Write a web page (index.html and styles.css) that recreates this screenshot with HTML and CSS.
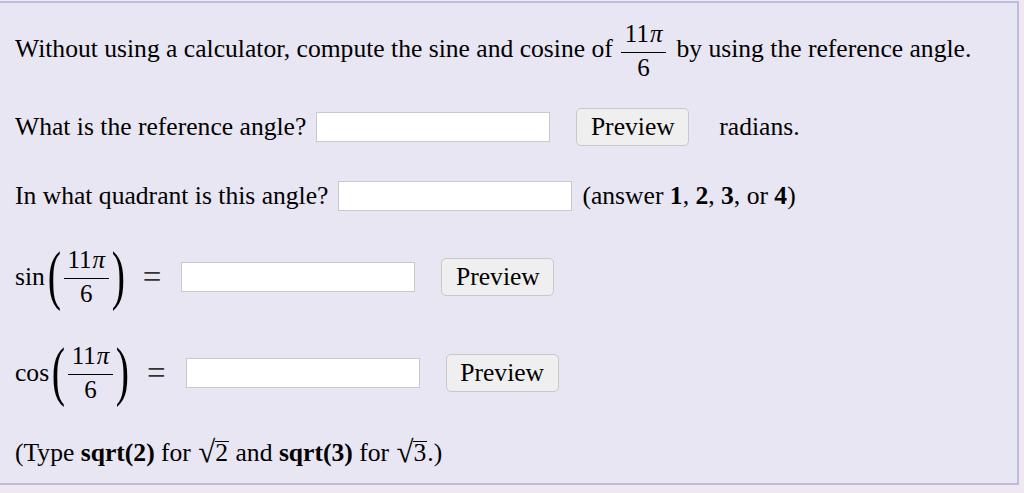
FILE: index.html
```html
<!DOCTYPE html>
<html>
<head>
<meta charset="utf-8">
<link rel="stylesheet" href="styles.css">
</head>
<body>
<div class="panel">
  <div class="row r1">
    <span>Without using a calculator, compute the sine and cosine of</span>
    <span class="frac f-inline"><span class="num">11<i class="pi">π</i></span><span class="bar"></span><span class="den">6</span></span>
    <span>by using the reference angle.</span>
  </div>
  <div class="row r2">
    <span>What is the reference angle?</span>
    <input class="field f-ref" type="text">
    <button class="btn b-ref">Preview</button>
    <span class="after">radians.</span>
  </div>
  <div class="row r3">
    <span>In what quadrant is this angle?</span>
    <input class="field f-quad" type="text">
    <span class="hint">(answer <b>1</b>, <b>2</b>, <b>3</b>, or <b>4</b>)</span>
  </div>
  <div class="row r4">
    <span class="fn">sin</span>
    <span class="paren">(</span>
    <span class="frac"><span class="num">11<i class="pi">π</i></span><span class="bar"></span><span class="den">6</span></span>
    <span class="paren">)</span>
    <span class="eq">=</span>
    <input class="field f-sin" type="text">
    <button class="btn b-trig">Preview</button>
  </div>
  <div class="row r5">
    <span class="fn">cos</span>
    <span class="paren">(</span>
    <span class="frac"><span class="num">11<i class="pi">π</i></span><span class="bar"></span><span class="den">6</span></span>
    <span class="paren">)</span>
    <span class="eq">=</span>
    <input class="field f-cos" type="text">
    <button class="btn b-trig">Preview</button>
  </div>
  <div class="row r6">
    <span>(Type <b>sqrt(2)</b> for <span class="rad">√</span><span class="radicand">2</span> and <b>sqrt(3)</b> for <span class="rad">√</span><span class="radicand">3</span>.)</span>
  </div>
</div>
</body>
</html>
```

FILE: styles.css
```css
html, body {
  margin: 0;
  padding: 0;
}
body {
  background: #efe8f0;
  font-family: "Liberation Serif", "Times New Roman", serif;
  font-size: 25.6px;
  color: #000;
  height: 493px;
  overflow: hidden;
}
.panel {
  margin-top: 1px;
  width: 1019px;
  height: 484px;
  box-sizing: border-box;
  background: #e8e6f2;
  border-top: 2px solid #bcbce0;
  border-right: 2px solid #bcbce0;
  border-bottom: 2px solid #bcbce0;
  padding: 0 0 0 15px;
  display: flex;
  flex-direction: column;
}
.row {
  display: flex;
  align-items: center;
  white-space: pre;
}
.r1 { height: 70px; margin-top: 11px; }
.r2 { height: 38px; margin-top: 24px; }
.r3 { height: 38px; margin-top: 31px; }
.r4 { height: 74px; margin-top: 25px; }
.r5 { height: 74px; margin-top: 22px; }
.r6 { height: 38px; margin-top: 24px; }

.frac {
  display: inline-flex;
  flex-direction: column;
  align-items: center;
  font-size: 25px;
  padding: 0;
}
.frac .num {
  line-height: 22px;
  padding: 0 4px 7px;
}
.pi {
  font-style: italic;
  margin-left: 1px;
}
.frac .bar {
  align-self: stretch;
  height: 1.5px;
  background: #000;
}
.frac .den {
  line-height: 22px;
  margin-top: 4px;
}
.f-inline {
  margin: 0 10px 0 8px;
  position: relative;
  top: 2px;
}

.field {
  box-sizing: border-box;
  height: 30px;
  width: 234px;
  background: #fff;
  border: 1px solid #c9c9c9;
  border-radius: 0;
  margin: 0;
  padding: 0;
}
.f-ref { margin-left: 10px; }
.f-quad { margin-left: 10px; }

.btn {
  box-sizing: border-box;
  width: 113px;
  height: 38px;
  background: #f0eff0;
  border: 1px solid #c8c8c8;
  border-radius: 5px;
  font-family: "Liberation Serif", "Times New Roman", serif;
  font-size: 25.6px;
  color: #000;
  padding: 0;
  margin: 0;
}
.b-ref { margin-left: 26px; }
.after { margin-left: 30px; }
.hint { margin-left: 10px; }

.paren {
  display: inline-block;
  font-size: 38px;
  line-height: 38px;
  transform: scale(1.05, 1.75);
  margin: 0 3px;
  position: relative;
  top: -3px;
}
.eq {
  font-size: 33px;
  color: #333;
  margin-left: 15px;
}
.f-sin { margin-left: 20px; }
.f-cos { margin-left: 20px; }
.b-trig { margin-left: 26px; }

.rad {
  display: inline-block;
  font-size: 31px;
  line-height: 22px;
  margin-left: 1px;
  position: relative;
  top: 1px;
}
.radicand {
  display: inline-block;
  border-top: 1.5px solid #000;
  line-height: 22px;
  padding-right: 1px;
}
```
